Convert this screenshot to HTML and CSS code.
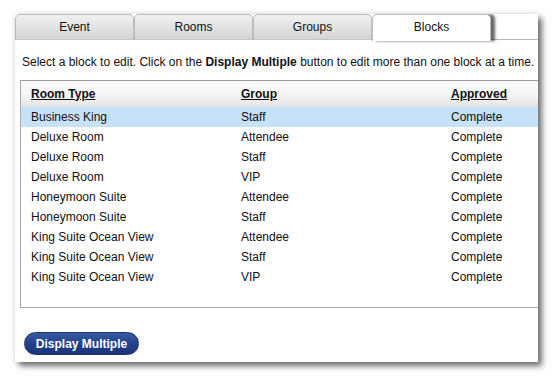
FILE: index.html
```html
<!DOCTYPE html>
<html lang="en">

<head>
    <meta charset="UTF-8">
    <meta name="viewport" content="width=device-width, initial-scale=1.0">
    <title>Blocks</title>
    <link rel="stylesheet" href="styles.css">
</head>

<body>

    <div class="window">
        <!-- Tab strip -->
        <div class="tabs">
            <div class="tab">Event</div>
            <div class="tab">Rooms</div>
            <div class="tab">Groups</div>
            <div class="tab active">Blocks</div>
            <div class="tab-filler"></div>
        </div>

        <!-- Blocks tab content -->
        <div class="content">
            <p class="hint">Select a block to edit. Click on the <b>Display Multiple</b> button to edit more than one block at a time.</p>

            <div class="grid">
                <table>
                    <thead>
                        <tr>
                            <th>Room Type</th>
                            <th>Group</th>
                            <th>Approved</th>
                        </tr>
                    </thead>
                    <tbody>
                        <tr class="selected">
                            <td>Business King</td>
                            <td>Staff</td>
                            <td>Complete</td>
                        </tr>
                        <tr>
                            <td>Deluxe Room</td>
                            <td>Attendee</td>
                            <td>Complete</td>
                        </tr>
                        <tr>
                            <td>Deluxe Room</td>
                            <td>Staff</td>
                            <td>Complete</td>
                        </tr>
                        <tr>
                            <td>Deluxe Room</td>
                            <td>VIP</td>
                            <td>Complete</td>
                        </tr>
                        <tr>
                            <td>Honeymoon Suite</td>
                            <td>Attendee</td>
                            <td>Complete</td>
                        </tr>
                        <tr>
                            <td>Honeymoon Suite</td>
                            <td>Staff</td>
                            <td>Complete</td>
                        </tr>
                        <tr>
                            <td>King Suite Ocean View</td>
                            <td>Attendee</td>
                            <td>Complete</td>
                        </tr>
                        <tr>
                            <td>King Suite Ocean View</td>
                            <td>Staff</td>
                            <td>Complete</td>
                        </tr>
                        <tr>
                            <td>King Suite Ocean View</td>
                            <td>VIP</td>
                            <td>Complete</td>
                        </tr>
                    </tbody>
                </table>
            </div>

            <button class="display-multiple" type="button">Display Multiple</button>
        </div>
    </div>

</body>

</html>
```

FILE: styles.css
```css
body {
    margin: 0;
    padding: 14px 15px;
    background-color: #fff;
    font-family: "Liberation Sans", Arial, sans-serif;
    font-size: 12px;
    color: #111;
}

/* Outer panel */
.window {
    width: 523px;
    height: 348px;
    background-color: #fff;
    box-shadow: 4px 4px 6px rgba(0, 0, 0, 0.55), 0 0 6px rgba(0, 0, 0, 0.12);
    overflow: hidden;
    display: flex;
    flex-direction: column;
}

/* Tabs */
.tabs {
    display: flex;
    height: 26px;
    flex-shrink: 0;
}

.tab {
    width: 117px;
    height: 25px;
    line-height: 25px;
    text-align: center;
    border: 1px solid #bdbdbd;
    border-bottom: 0;
    border-radius: 5px 5px 0 0;
    background: linear-gradient(#f1f1f1, #d3d3d3);
    color: #111;
    box-shadow: inset 0 -1px 0 #c4c4c4;
}

.tab.active {
    background: #fff;
    height: 26px;
    box-shadow: 4px 0 3px rgba(0, 0, 0, 0.6);
    position: relative;
    z-index: 1;
}

.tab-filler {
    flex: 1;
    border-bottom: 1px solid #b5b5b5;
    height: 25px;
}

/* Content */
.content {
    padding: 0 0 0 5px;
}

.hint {
    margin: 15px 0 0 2px;
    line-height: 14px;
}

.grid {
    margin-top: 11px;
    width: 540px;
    height: 226px;
    border: 1px solid #a8a8a8;
    border-top-color: #9c9c9c;
}

table {
    border-collapse: collapse;
    table-layout: fixed;
    width: 630px;
}

th {
    width: 200px;
    height: 25px;
    padding: 0 0 0 10px;
    text-align: left;
    text-decoration: underline;
    font-weight: bold;
    background: linear-gradient(#fafafa, #f6f6f6 50%, #e6e6e6);
    border-bottom: 1px solid #dedede;
}

td {
    height: 20px;
    padding: 0 0 0 10px;
}

tr.selected td {
    background-color: #c6e2f9;
}

/* Button */
.display-multiple {
    margin: 24px 0 0 4px;
    width: 115px;
    height: 23px;
    padding: 0;
    border: 1px solid #1b2f6b;
    border-radius: 12px;
    background: linear-gradient(#3859a3, #22408a 55%, #1b3478);
    color: #fff;
    font-family: "Liberation Sans", Arial, sans-serif;
    font-size: 12px;
    font-weight: bold;
    cursor: pointer;
}
```
